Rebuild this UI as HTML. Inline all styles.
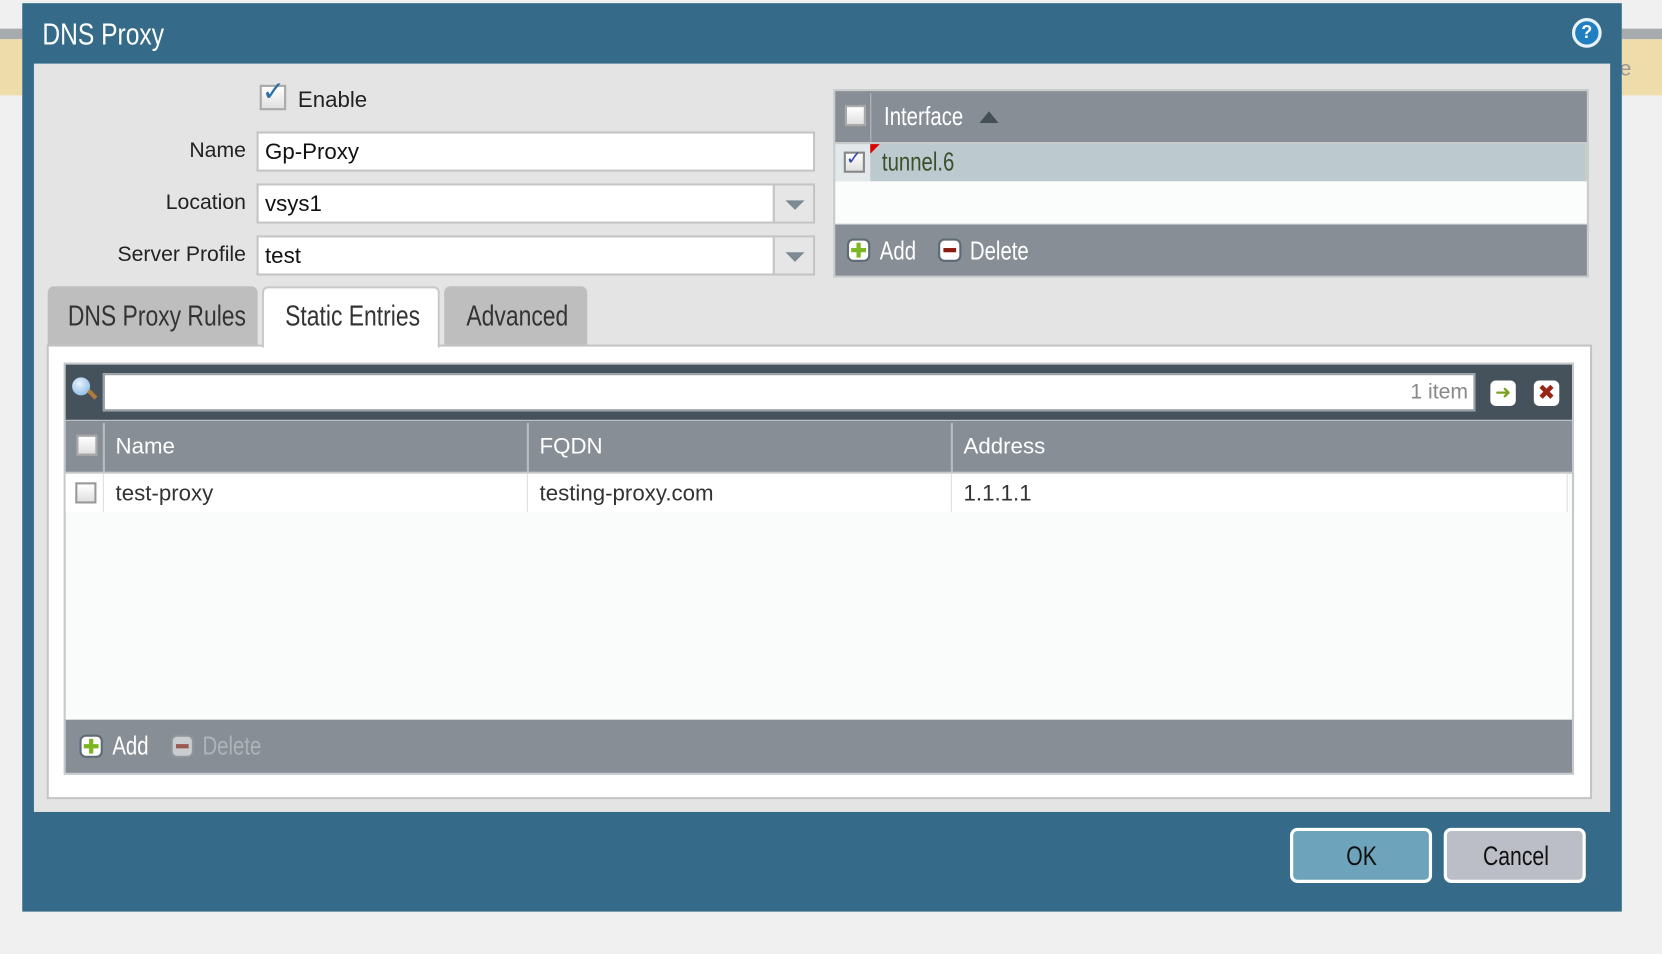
<!DOCTYPE html>
<html><head><meta charset="utf-8">
<style>
*{box-sizing:border-box;margin:0;padding:0}
html,body{width:1662px;height:954px;overflow:hidden;background:#f0f0f0}
#w{position:absolute;left:0;top:0;width:1568px;height:900px;transform:scale(1.06);transform-origin:0 0;font-family:"Liberation Sans",sans-serif}
.a{position:absolute}
.nar{font-family:"Liberation Sans",sans-serif;transform:scaleX(.8);transform-origin:0 0;white-space:nowrap}
.ver{font-family:"Liberation Sans",sans-serif;white-space:nowrap}
.cb{position:absolute;width:20px;height:20px;border:2px solid #a9a9a9;background:linear-gradient(#fff,#e0e0e0)}
.inp{position:absolute;background:#fff;border:2px solid #c4c4c4;padding-left:6px;color:#111}
.dd{position:absolute;right:0;top:0;bottom:0;width:38px;background:#e6e6e6;border-left:2px solid #c4c4c4}
.dd:after{content:"";position:absolute;left:10px;top:14px;border-left:9px solid transparent;border-right:9px solid transparent;border-top:9px solid #7b8a93}
.lbl{position:absolute;right:1336px;font-size:20px;color:#222;text-align:right}
.ico{position:absolute;width:22px;height:22px;border:2px solid #5d6b74;border-radius:6px;background:#fff}
</style></head><body><div id="w">
<div class="a" style="left:0;top:27px;width:21px;height:10px;background:#a8abae"></div>
<div class="a" style="left:0;top:37px;width:21px;height:53px;background:#efdcab"></div>
<div class="a" style="left:1530px;top:27px;width:38px;height:10px;background:#a8abae"></div>
<div class="a" style="left:1530px;top:37px;width:38px;height:53px;background:#efdcab"></div>
<div class="a ver" style="left:1528px;top:54px;font-size:20px;color:#999">e</div>

<div class="a" style="left:21px;top:3px;width:1509px;height:857px;background:#356b89"></div>
<div class="a nar" style="left:40px;top:17px;font-size:29px;color:#fff">DNS Proxy</div>
<div class="a" style="left:1483px;top:17px;width:28px;height:28px;border-radius:50%;background:#1f7fc0;border:3px solid #e8f2f8;color:#fff;font:bold 17px 'Liberation Sans';text-align:center;line-height:22px">?</div>

<div class="a" style="left:32px;top:60px;width:1487px;height:706px;background:#e4e4e4"></div>

<div class="cb" style="left:245px;top:80px;width:25px;height:24px;"></div>
<div class="a" style="left:247px;top:72px;font:bold 26px 'DejaVu Sans';color:#2c6ea8">✓</div>
<div class="a ver" style="left:281px;top:83px;font-size:21px;color:#222">Enable</div>

<div class="lbl ver" style="top:131px">Name</div>
<div class="lbl ver" style="top:180px">Location</div>
<div class="lbl ver" style="top:229px">Server Profile</div>
<div class="inp ver" style="left:242px;top:124px;width:527px;height:38px;line-height:36px;font-size:21px">Gp-Proxy</div>
<div class="inp ver" style="left:242px;top:173px;width:527px;height:38px;line-height:36px;font-size:21px">vsys1<div class="dd"></div></div>
<div class="inp ver" style="left:242px;top:222px;width:527px;height:38px;line-height:36px;font-size:21px">test<div class="dd"></div></div>

<!-- interface table -->
<div class="a" style="left:786px;top:84px;width:713px;height:178px;background:#c9cbcd"></div>
<div class="a" style="left:788px;top:86px;width:709px;height:48px;background:#878e96"></div>
<div class="a" style="left:821px;top:88px;width:1px;height:46px;background:#b7bcc1"></div>
<div class="cb" style="left:797px;top:99px"></div>
<div class="a nar" style="left:834px;top:97px;font-size:24px;color:#fff">Interface</div>
<div class="a" style="left:924px;top:105px;border-left:9px solid transparent;border-right:9px solid transparent;border-bottom:11px solid #444e56"></div>
<div class="a" style="left:788px;top:136px;width:707px;height:35px;background:#bccacf"></div>
<div class="a" style="left:788px;top:136px;width:33px;height:35px;background:#e3e9ea"></div>
<div class="cb" style="left:796px;top:143px;border-color:#888"></div>
<div class="a" style="left:798px;top:139px;font:bold 18px 'DejaVu Sans';color:#2d48b0">✓</div>
<div class="a" style="left:821px;top:136px;border-right:9px solid transparent;border-top:9px solid #d00"></div>
<div class="a nar" style="left:832px;top:140px;font-size:24px;color:#3c4f2a">tunnel.6</div>
<div class="a" style="left:788px;top:171px;width:709px;height:40px;background:#fbfdfc"></div>
<div class="a" style="left:788px;top:212px;width:709px;height:48px;background:#878e96"></div>
<div class="ico" style="left:799px;top:225px"></div>
<div class="a" style="left:808px;top:229px;width:4px;height:14px;background:#7cb623"></div>
<div class="a" style="left:803px;top:234px;width:14px;height:4px;background:#7cb623"></div>
<div class="a nar" style="left:830px;top:224px;font-size:24px;color:#fff">Add</div>
<div class="ico" style="left:885px;top:225px"></div>
<div class="a" style="left:890px;top:234px;width:12px;height:4px;background:#8b1c12"></div>
<div class="a nar" style="left:915px;top:224px;font-size:24px;color:#fff">Delete</div>

<!-- tabs -->
<div class="a" style="left:45px;top:270px;width:198px;height:56px;background:#bebebe;border-radius:6px 6px 0 0"></div>
<div class="a nar" style="left:64px;top:283px;font-size:27px;color:#333">DNS Proxy Rules</div>
<div class="a" style="left:419px;top:270px;width:135px;height:56px;background:#bebebe;border-radius:6px 6px 0 0"></div>
<div class="a nar" style="left:440px;top:283px;font-size:27px;color:#333">Advanced</div>
<div class="a" style="left:44px;top:325px;width:1458px;height:429px;background:#fff;border:2px solid #c4c4c4"></div>
<div class="a" style="left:247px;top:270px;width:168px;height:58px;background:#fff;border:2px solid #c9c9c9;border-bottom:none;border-radius:6px 6px 0 0"></div>
<div class="a nar" style="left:269px;top:283px;font-size:27px;color:#333">Static Entries</div>

<!-- grid -->
<div class="a" style="left:60px;top:342px;width:1425px;height:389px;background:#c6c9cc"></div>
<div class="a" style="left:62px;top:344px;width:1421px;height:52px;background:#45525c"></div>
<div class="a" style="left:68px;top:356px;width:17px;height:17px;border-radius:50%;background:radial-gradient(circle at 40% 35%,#e8f4ff,#78aee0);"></div>
<div class="a" style="left:82px;top:370px;width:10px;height:4px;background:#b07a3a;transform:rotate(45deg)"></div>
<div class="a" style="left:97px;top:352px;width:1295px;height:36px;background:#fff;border:2px solid #9aa1a6"></div>
<div class="a" style="left:1300px;top:359px;width:85px;text-align:right;font:20px 'Liberation Sans';color:#888">1 item</div>
<div class="a" style="left:1406px;top:359px;width:24px;height:24px;background:#fff;border-radius:5px;color:#7aa020;font:bold 18px 'DejaVu Sans';text-align:center;line-height:23px">➜</div>
<div class="a" style="left:1447px;top:359px;width:24px;height:24px;background:#fff;border-radius:5px;color:#9a2514;font:bold 20px 'DejaVu Sans';text-align:center;line-height:23px">✖</div>
<div class="a" style="left:62px;top:397px;width:1421px;height:48px;background:#878e96"></div>
<div class="a" style="left:97px;top:399px;width:2px;height:46px;background:#b7bcc1"></div>
<div class="a" style="left:497px;top:399px;width:2px;height:46px;background:#b7bcc1"></div>
<div class="a" style="left:897px;top:399px;width:2px;height:46px;background:#b7bcc1"></div>
<div class="cb" style="left:72px;top:410px"></div>
<div class="a ver" style="left:109px;top:410px;font-size:21px;color:#fff">Name</div>
<div class="a ver" style="left:509px;top:410px;font-size:21px;color:#fff">FQDN</div>
<div class="a ver" style="left:909px;top:410px;font-size:21px;color:#fff">Address</div>
<div class="a" style="left:62px;top:447px;width:1421px;height:232px;background:#fafcfb"></div>
<div class="a" style="left:62px;top:447px;width:1418px;height:36px;background:#fff"></div>
<div class="a" style="left:97px;top:447px;width:1px;height:36px;background:#ddd"></div>
<div class="a" style="left:497px;top:447px;width:1px;height:36px;background:#ddd"></div>
<div class="a" style="left:897px;top:447px;width:1px;height:36px;background:#ddd"></div>
<div class="a" style="left:1478px;top:447px;width:1px;height:36px;background:#ddd"></div>
<div class="cb" style="left:71px;top:455px;border-color:#999"></div>
<div class="a ver" style="left:109px;top:454px;font-size:21px;color:#333">test-proxy</div>
<div class="a ver" style="left:509px;top:454px;font-size:21px;color:#333">testing-proxy.com</div>
<div class="a ver" style="left:909px;top:454px;font-size:21px;color:#333">1.1.1.1</div>
<div class="a" style="left:62px;top:679px;width:1421px;height:50px;background:#878e96"></div>
<div class="ico" style="left:75px;top:693px"></div>
<div class="a" style="left:84px;top:697px;width:4px;height:14px;background:#7cb623"></div>
<div class="a" style="left:79px;top:702px;width:14px;height:4px;background:#7cb623"></div>
<div class="a nar" style="left:106px;top:691px;font-size:24px;color:#fff">Add</div>
<div class="ico" style="left:161px;top:693px;background:#c9cdd0;border-color:#8f979d"></div>
<div class="a" style="left:166px;top:702px;width:12px;height:4px;background:#9a5a52"></div>
<div class="a nar" style="left:191px;top:691px;font-size:24px;color:#aeb3b8">Delete</div>

<!-- buttons -->
<div class="a" style="left:1217px;top:781px;width:134px;height:52px;background:#6ea4bb;border:3px solid #fff;border-radius:7px"></div>
<div class="a nar" style="left:1270px;top:794px;font-size:25px;color:#111">OK</div>
<div class="a" style="left:1362px;top:781px;width:134px;height:52px;background:#bbbec6;border:3px solid #fff;border-radius:7px"></div>
<div class="a nar" style="left:1399px;top:794px;font-size:25px;color:#111">Cancel</div>
</div></body></html>
